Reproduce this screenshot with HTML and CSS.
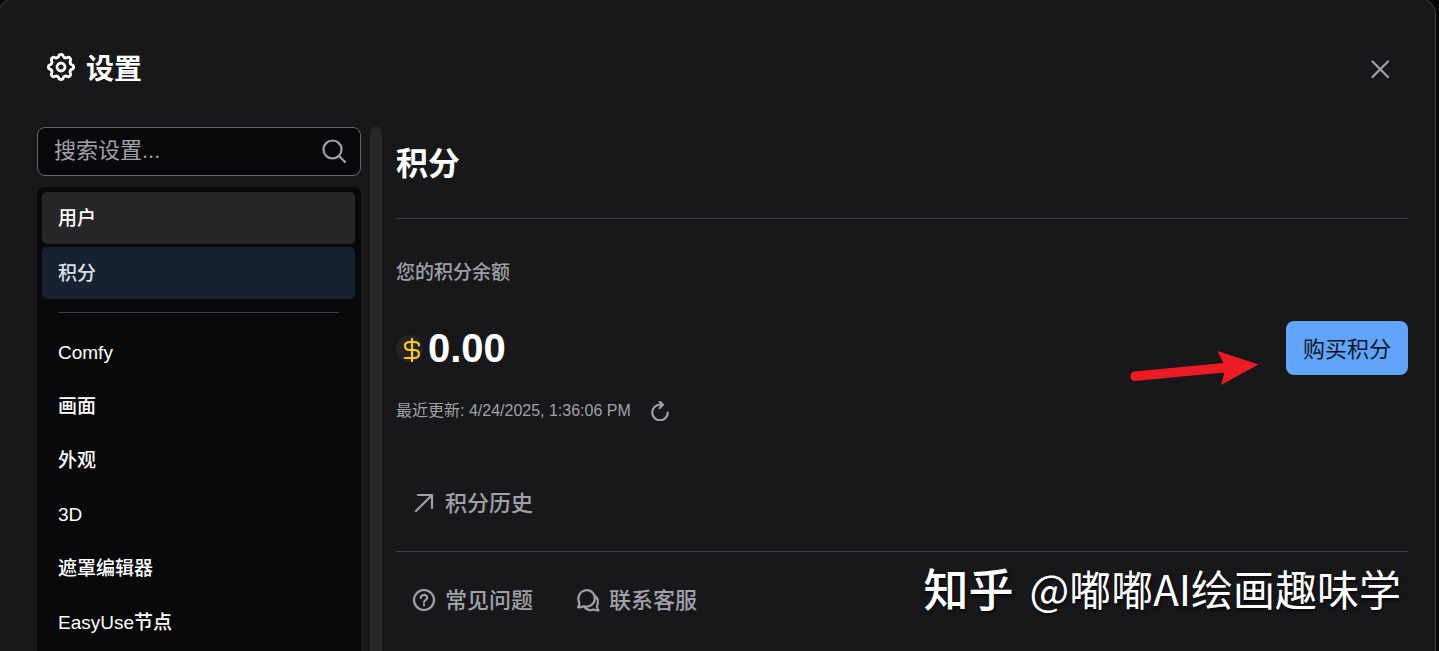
FILE: index.html
```html
<!DOCTYPE html>
<html lang="zh-CN">
<head>
    <meta charset="UTF-8">
    <meta name="viewport" content="width=device-width, initial-scale=1.0">
    <title>设置</title>
    <link rel="stylesheet" href="styles.css">
</head>
<body>
    <div class="dialog" role="dialog" aria-labelledby="dialogTitle">
        <header class="dialog-header">
            <svg class="icon-cog" viewBox="-14 -14 28 28" aria-hidden="true">
                <defs>
                    <path id="tooth" d="M-3.83 -9.24C-2.8 -9.65 -2.4 -10.2 -2.2 -11C-1.9 -12.5 -1.1 -12.6 0 -12.6C1.1 -12.6 1.9 -12.5 2.2 -11C2.4 -10.2 2.8 -9.65 3.83 -9.24"/>
                </defs>
                <use href="#tooth"/>
                <use href="#tooth" transform="rotate(45)"/>
                <use href="#tooth" transform="rotate(90)"/>
                <use href="#tooth" transform="rotate(135)"/>
                <use href="#tooth" transform="rotate(180)"/>
                <use href="#tooth" transform="rotate(225)"/>
                <use href="#tooth" transform="rotate(270)"/>
                <use href="#tooth" transform="rotate(315)"/>
                <circle r="4"/>
            </svg>
            <h1 id="dialogTitle">设置</h1>
            <button class="close-btn" type="button" aria-label="关闭">
                <svg viewBox="0 0 20 20" aria-hidden="true"><path d="M2.500 2.500L18 18M18 2.500L2.500 18"/></svg>
            </button>
        </header>

        <div class="dialog-body">
            <aside class="sidebar">
                <div class="search-box">
                    <input type="text" placeholder="搜索设置..." aria-label="搜索设置">
                    <svg viewBox="0 0 24 24" aria-hidden="true"><circle cx="10.5" cy="10.5" r="9"/><path d="M17 17L23 23"/></svg>
                </div>
                <nav class="menu">
                    <button class="menu-item hover" type="button">用户</button>
                    <button class="menu-item active" type="button">积分</button>
                    <hr>
                    <div class="menu-group">
                        <button class="menu-item" type="button">Comfy</button>
                        <button class="menu-item" type="button">画面</button>
                        <button class="menu-item" type="button">外观</button>
                        <button class="menu-item" type="button">3D</button>
                        <button class="menu-item" type="button">遮罩编辑器</button>
                        <button class="menu-item" type="button">EasyUse节点</button>
                    </div>
                </nav>
            </aside>

            <div class="splitter"></div>

            <main class="content">
                <h2>积分</h2>
                <hr>
                <h3>您的积分余额</h3>
                <div class="balance-row">
                    <span class="coin">
                        <svg viewBox="0 0 18 24" aria-hidden="true"><path d="M9 1V23M16 7.500C16 5 13.800 4 11 4H7C4 4 2 5.500 2 8S4 12 7 12H11C14 12 16 13.500 16 16S14 20 11 20H2"/></svg>
                    </span>
                    <span class="amount">0.00</span>
                    <!-- arrow pointing at the purchase button -->
                    <svg class="pointer" viewBox="0 0 130 36" aria-hidden="true"><path d="M5.500 21.500L94.500 13L88.500 1L129.500 14.500L92 35L95.500 22.500L5.500 31A4.800 4.800 0 0 1 5.500 21.500Z"/></svg>
                    <button class="buy-btn" type="button">购买积分</button>
                </div>
                <div class="updated">
                    <span>最近更新: 4/24/2025, 1:36:06 PM</span>
                    <button class="refresh-btn" type="button" aria-label="刷新">
                        <svg viewBox="0 0 20 20" aria-hidden="true"><path d="M17.800 11.500A7.800 7.800 0 1 1 10 3.700H13M9.700 0.600L13 3.700L9.700 7"/></svg>
                    </button>
                </div>
                <div class="links history">
                    <button class="link-btn" type="button">
                        <svg viewBox="0 0 22 22" aria-hidden="true"><path d="M3 18L19 2M5 2H19V15"/></svg>
                        积分历史
                    </button>
                </div>
                <hr>
                <div class="links">
                    <button class="link-btn" type="button">
                        <svg viewBox="0 0 22 22" aria-hidden="true"><circle cx="11" cy="10" r="10"/><path d="M7.800 8C7.800 4 14.200 4 14.200 7.800C14.200 10 11 9.800 11 12.500M11 14.800V15.300"/></svg>
                        常见问题
                    </button>
                    <button class="link-btn" type="button">
                        <svg viewBox="0 0 22 22" aria-hidden="true"><path d="M9.500 0A8.300 8.300 0 1 1 7 16.200C5 17 3 17.300 1 17.300C2 16 2.500 14.800 2.300 13C0 8 1.500 1.500 9.500 0Z"/><path d="M18.300 6C21.500 9 21.500 12.500 20 16C19.800 17.800 20.500 19 21.500 20.500C19.500 20.500 17.800 20.200 16.500 19.500C13.500 21 9.800 20 7.500 17"/></svg>
                        联系客服
                    </button>
                </div>
            </main>
        </div>
    </div>

    <div class="watermark"><b>知乎</b><span>@嘟嘟AI绘画趣味学</span></div>
</body>
</html>
```

FILE: styles.css
```css
:root {
    --surface: #18181b;
    --dark: #09090b;
    --line: #3f3f46;
    --muted: #a1a1aa;
    --primary: #60a5fa;
}

* {
    box-sizing: border-box;
}

body {
    margin: 0;
    height: 100vh;
    overflow: hidden;
    display: flex;
    background: #050506;
    color: white;
    font-family: "Liberation Sans", "Noto Sans CJK SC", sans-serif;
}

button {
    border: none;
    background: none;
    color: inherit;
    font-family: inherit;
    cursor: pointer;
}

svg {
    display: block;
    flex: none;
    fill: none;
    stroke: currentColor;
    stroke-width: 2.2;
    stroke-linecap: round;
    stroke-linejoin: round;
}

hr {
    width: 100%;
    height: 1px;
    margin: 0;
    border: none;
    background: var(--line);
}

.dialog {
    flex: 1;
    display: flex;
    flex-direction: column;
    margin: -2px 3px -20px -2px;
    padding: 50px 27px 0 38px;
    background: var(--surface);
    border: 1px solid var(--line);
    border-radius: 16px;
}

/* Header */
.dialog-header {
    display: flex;
    align-items: center;
    height: 40px;
    margin-bottom: 38px;
    padding: 0 8px 0 10px;
}

.icon-cog {
    width: 28px;
    height: 28px;
    margin-bottom: 4px;
    stroke-width: 2.8;
}

.dialog-header h1 {
    flex: 1;
    margin: 0 0 0 11px;
    padding-top: 2px;
    font-size: 28px;
    line-height: 40px;
    font-weight: bold;
}

.close-btn {
    display: flex;
    align-items: center;
    justify-content: center;
    width: 40px;
    height: 40px;
    padding: 0;
    color: var(--muted);
}

.close-btn svg {
    width: 20px;
    height: 20px;
}

.dialog-body {
    flex: 1;
    display: flex;
    min-height: 0;
}

/* Sidebar */
.sidebar {
    flex: none;
    display: flex;
    flex-direction: column;
    width: 324px;
}

.search-box {
    display: flex;
    align-items: center;
    height: 49px;
    padding: 0 14px 2px 16px;
    background: var(--dark);
    border: 1px solid #65656c;
    border-radius: 8px;
    color: var(--muted);
}

.search-box input {
    flex: 1;
    min-width: 0;
    padding: 0;
    border: none;
    outline: none;
    background: none;
    color: white;
    font-family: inherit;
    font-size: 22px;
    line-height: 32px;
}

.search-box input::placeholder {
    color: var(--muted);
}

.search-box svg {
    width: 24px;
    height: 24px;
}

.menu {
    flex: 1;
    display: flex;
    flex-direction: column;
    gap: 3px;
    margin-top: 11px;
    padding: 5px 6px 0 5px;
    background: var(--dark);
    border-radius: 8px 8px 0 0;
}

.menu hr {
    width: auto;
    margin: 10px 16px;
}

.menu-group {
    display: flex;
    flex-direction: column;
    gap: 2px;
}

.menu-item {
    flex: none;
    height: 52px;
    padding: 2px 16px 0;
    border-radius: 5px;
    text-align: left;
    font-size: 19px;
    line-height: 28px;
    font-weight: 500;
}

.menu-item.hover {
    background: #27272a;
}

.menu-item.active {
    background: #172230;
    color: #dbe2ee;
}

.splitter {
    flex: none;
    width: 12px;
    margin: 0 14px 0 9px;
    background: #27272a;
    border-radius: 5px 5px 0 0;
}

/* Credits panel */
.content {
    flex: 1;
    min-width: 0;
}

.content h2 {
    margin: 0 0 34px;
    padding-top: 17px;
    font-size: 32px;
    line-height: 40px;
}

.content h3 {
    margin: 42px 0 36px;
    color: var(--muted);
    font-size: 19px;
    line-height: 24px;
    font-weight: 500;
}

.balance-row {
    position: relative;
    display: flex;
    align-items: center;
    height: 54px;
}

.coin {
    display: flex;
    align-items: center;
    justify-content: flex-end;
    width: 27px;
    height: 27px;
    padding: 4px 2px 0 0;
    margin-right: 5px;
    border-radius: 50%;
    background: #242426;
    color: #facc15;
}

.coin svg {
    width: 18px;
    height: 24px;
}

.amount {
    flex: 1;
    font-size: 40px;
    line-height: 48px;
    font-weight: bold;
}

.buy-btn {
    height: 54px;
    padding: 3px 17px 0;
    border-radius: 8px;
    background: var(--primary);
    color: #0b1726;
    font-size: 22px;
    line-height: 32px;
}

.pointer {
    position: absolute;
    right: 149px;
    top: 29px;
    width: 130px;
    height: 36px;
    fill: #ed1c24;
    stroke: none;
}

.updated {
    display: flex;
    align-items: center;
    gap: 13px;
    height: 32px;
    margin-top: 20px;
    color: var(--muted);
    font-size: 16px;
    line-height: 24px;
}

.refresh-btn {
    padding: 6px;
}

.refresh-btn svg {
    width: 20px;
    height: 20px;
}

.links {
    display: flex;
    gap: 10px;
    margin-top: 24px;
}

.links.history {
    margin: 52px 0 24px;
}

.link-btn {
    display: flex;
    align-items: center;
    gap: 10px;
    height: 48px;
    padding: 2px 17px 0;
    color: var(--muted);
    font-size: 22px;
    line-height: 32px;
    font-weight: 500;
}

.link-btn svg {
    width: 22px;
    height: 22px;
    overflow: visible;
}

.watermark {
    position: absolute;
    right: 38px;
    bottom: 31px;
    display: flex;
    align-items: center;
    gap: 16px;
    font-family: "Noto Sans CJK SC", sans-serif;
    font-size: 42px;
    line-height: 64px;
    text-shadow: 1px 2px 3px rgba(0, 0, 0, 0.7);
}

.watermark b {
    font-size: 45px;
    font-weight: 500;
}
```
